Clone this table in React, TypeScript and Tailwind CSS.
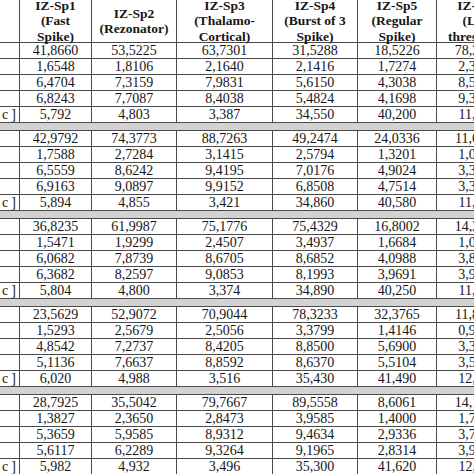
const cols = ['w-[20px]', 'w-[72px]', 'w-[85px]', 'w-[96px]', 'w-[85px]', 'w-[79px]', 'w-[82px]'];

const headers: string[][] = [
  ['IZ-Sp1', '(Fast', 'Spike)'],
  ['IZ-Sp2', '(Rezonator)'],
  ['IZ-Sp3', '(Thalamo-', 'Cortical)'],
  ['IZ-Sp4', '(Burst of 3', 'Spike)'],
  ['IZ-Sp5', '(Regular', 'Spike)'],
  ['IZ-Sp6', '(Low', 'threshold)'],
];

// one block per data set, last row of each block is the run time
const groups: string[][][] = [
  [
    ['41,8660', '53,5225', '63,7301', '31,5288', '18,5226', '78,2514'],
    ['1,6548', '1,8106', '2,1640', '2,1416', '1,7274', '2,3371'],
    ['6,4704', '7,3159', '7,9831', '5,6150', '4,3038', '8,5042'],
    ['6,8243', '7,7087', '8,4038', '5,4824', '4,1698', '9,3216'],
    ['5,792', '4,803', '3,387', '34,550', '40,200', '11,360'],
  ],
  [
    ['42,9792', '74,3773', '88,7263', '49,2474', '24,0336', '11,6218'],
    ['1,7588', '2,7284', '3,1415', '2,5794', '1,3201', '1,0542'],
    ['6,5559', '8,6242', '9,4195', '7,0176', '4,9024', '3,3187'],
    ['6,9163', '9,0897', '9,9152', '6,8508', '4,7514', '3,3065'],
    ['5,894', '4,855', '3,421', '34,860', '40,580', '11,420'],
  ],
  [
    ['36,8235', '61,9987', '75,1776', '75,4329', '16,8002', '14,2937'],
    ['1,5471', '1,9299', '2,4507', '3,4937', '1,6684', '1,0815'],
    ['6,0682', '7,8739', '8,6705', '8,6852', '4,0988', '3,8126'],
    ['6,3682', '8,2597', '9,0853', '8,1993', '3,9691', '3,9340'],
    ['5,804', '4,800', '3,374', '34,890', '40,250', '11,390'],
  ],
  [
    ['23,5629', '52,9072', '70,9044', '78,3233', '32,3765', '11,8052'],
    ['1,5293', '2,5679', '2,5056', '3,3799', '1,4146', '0,9731'],
    ['4,8542', '7,2737', '8,4205', '8,8500', '5,6900', '3,3428'],
    ['5,1136', '7,6637', '8,8592', '8,6370', '5,5104', '3,5019'],
    ['6,020', '4,988', '3,516', '35,430', '41,490', '12,050'],
  ],
  [
    ['28,7925', '35,5042', '79,7667', '89,5558', '8,6061', '14,1873'],
    ['1,3827', '2,3650', '2,8473', '3,9585', '1,4000', '1,7264'],
    ['5,3659', '5,9585', '8,9312', '9,4634', '2,9336', '3,7451'],
    ['5,6117', '6,2289', '9,3264', '9,1965', '2,8314', '3,9308'],
    ['5,982', '4,932', '3,496', '35,300', '41,620', '12,110'],
  ],
];

function Row({ label, cells }: { label: string; cells: string[] }) {
  return (
    <div className="flex h-[16px] border-b border-[#4a4a4a]">
      <div className={`${cols[0]} shrink-0 flex justify-end items-center overflow-hidden whitespace-nowrap border-r border-[#4a4a4a] tracking-[3px]`}>
        {label}
      </div>
      {cells.map((c, i) => (
        <div
          key={i}
          className={`${cols[i + 1]} shrink-0 flex items-center justify-center border-r border-[#4a4a4a] leading-none`}
        >
          {c}
        </div>
      ))}
    </div>
  );
}

export default function App() {
  return (
    <div className="w-[474px] h-[474px] overflow-hidden bg-white font-['Liberation_Serif','Times_New_Roman',serif] text-[14px] text-[#161616]">
      <div className="flex h-[43px] border-b border-[#4a4a4a]">
        <div className={`${cols[0]} shrink-0 border-r border-[#4a4a4a]`} />
        {headers.map((h, i) => (
          <div
            key={i}
            className={`${cols[i + 1]} shrink-0 flex flex-col items-center justify-center border-r border-[#4a4a4a] font-bold text-[13.5px] leading-[15.5px] whitespace-nowrap`}
          >
            {h.map((line) => (
              <span key={line}>{line}</span>
            ))}
          </div>
        ))}
      </div>
      {groups.map((g, gi) => (
        <div key={gi}>
          {gi > 0 && <div className="h-[8px] bg-[#d2d2d2] border-b border-[#4a4a4a]" />}
          {g.map((r, ri) => (
            <Row key={ri} label={ri === 4 ? 'Time [sec]' : ''} cells={r} />
          ))}
        </div>
      ))}
    </div>
  );
}
